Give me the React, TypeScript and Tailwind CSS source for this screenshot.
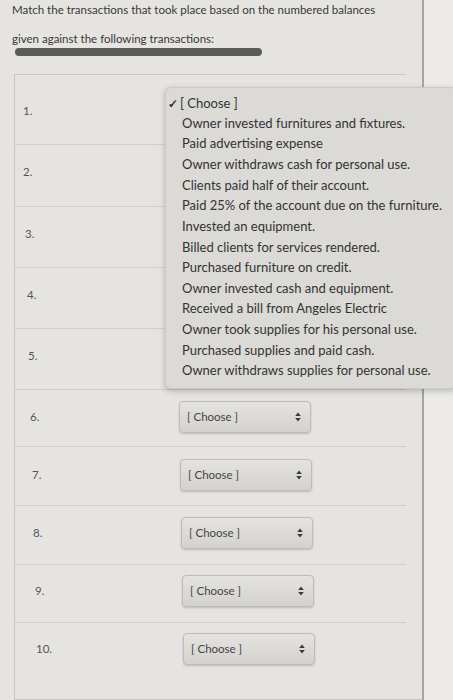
import React from "react";

const options = [
  "Owner invested furnitures and fixtures.",
  "Paid advertising expense",
  "Owner withdraws cash for personal use.",
  "Clients paid half of their account.",
  "Paid 25% of the account due on the furniture.",
  "Invested an equipment.",
  "Billed clients for services rendered.",
  "Purchased furniture on credit.",
  "Owner invested cash and equipment.",
  "Received a bill from Angeles Electric",
  "Owner took supplies for his personal use.",
  "Purchased supplies and paid cash.",
  "Owner withdraws supplies for personal use.",
];

const rows = [
  { n: "1.", h: "h-[70px] pt-[20px]", nx: "w-[156px] pl-[8px]", hidden: true },
  { n: "2.", h: "h-[62px] pt-[11px]", nx: "w-[156px] pl-[8px]", hidden: true },
  { n: "3.", h: "h-[61px] pt-[11px]", nx: "w-[156px] pl-[10px]", hidden: true },
  { n: "4.", h: "h-[61px] pt-[11px]", nx: "w-[156px] pl-[12px]", hidden: true },
  { n: "5.", h: "h-[61px] pt-[11px]", nx: "w-[156px] pl-[13px]", hidden: true },
  { n: "6.", h: "h-[57px] pt-[11px]", nx: "w-[164px] pl-[15px]", hidden: false },
  { n: "7.", h: "h-[59px] pt-[12px]", nx: "w-[165px] pl-[17px]", hidden: false },
  { n: "8.", h: "h-[59px] pt-[11px]", nx: "w-[166px] pl-[18px]", hidden: false },
  { n: "9.", h: "h-[58px] pt-[10px]", nx: "w-[167px] pl-[20px]", hidden: false },
  { n: "10.", h: "h-[74px] pt-[10px]", nx: "w-[168px] pl-[21px]", hidden: false },
];

function Arrows() {
  return (
    <svg width="6" height="10" viewBox="0 0 6 10" className="shrink-0">
      <polygon points="3,0.5 5.8,4 0.2,4" fill="#3a3a3a" />
      <polygon points="0.2,6 5.8,6 3,9.5" fill="#3a3a3a" />
    </svg>
  );
}

function Select({ hidden }: { hidden: boolean }) {
  return (
    <div
      className={`${hidden ? "invisible" : ""} w-[132px] h-[32px] rounded-[4px] border border-[#bdbcb8] bg-gradient-to-b from-[#e4e3df] to-[#d3d2ce] shadow-[0_1px_2px_rgba(0,0,0,0.18)] flex items-center justify-between pl-[7px] pr-[9px]`}
    >
      <span className="text-[11.5px] text-[#454545]">[ Choose ]</span>
      <Arrows />
    </div>
  );
}

export default function App() {
  return (
    <div className="relative w-[453px] h-[700px] overflow-hidden bg-[#e5e4e0] font-['Lato','Liberation_Sans',sans-serif]">
      <div className="flex h-full">
        <div className="w-[424px] h-full border-r-2 border-[#a5a49f] flex flex-col">
          <div className="pl-[12px] mt-[-5px] text-[11.5px] leading-[29px] text-[#383838]">
            <p>Match the transactions that took place based on the numbered balances</p>
            <p>given against the following transactions:</p>
          </div>
          <div className="ml-[15px] mt-[-5px] w-[247px] h-[8px] rounded-full bg-[#5b5b5b]" />
          <div className="ml-[14px] mt-[18px] flex-1 border-l border-b border-[#c6c5c0] flex flex-col">
            <div className="w-[391px] border-t border-[#c9c8c3]" />
            {rows.map((r) => (
              <div key={r.n} className={`${r.h} w-[391px] flex items-start border-b border-[#cfcec9] last:border-b-0`}>
                <div className={`${r.nx} h-[32px] flex items-center text-[11.5px] text-[#555555]`}>{r.n}</div>
                <Select hidden={r.hidden} />
              </div>
            ))}
          </div>
        </div>
        <div className="flex-1 h-full bg-[#ebeae6]" />
      </div>

      <div className="absolute left-[165px] top-[87px] w-[292px] rounded-[6px] bg-[#dbdad6] border border-[#cac9c4] shadow-[0_2px_6px_rgba(0,0,0,0.22)] pt-[7px] pb-[6px] text-[13px] text-[#333333]">
        <div className="h-[18px] flex items-center pl-[2px]">
          <span className="w-[12px] text-[12px] font-bold text-[#333]">✓</span>
          <span>[ Choose ]</span>
        </div>
        {options.map((o) => (
          <div key={o} className="h-[20.67px] flex items-center pl-[16px] whitespace-nowrap">
            {o}
          </div>
        ))}
      </div>
    </div>
  );
}
